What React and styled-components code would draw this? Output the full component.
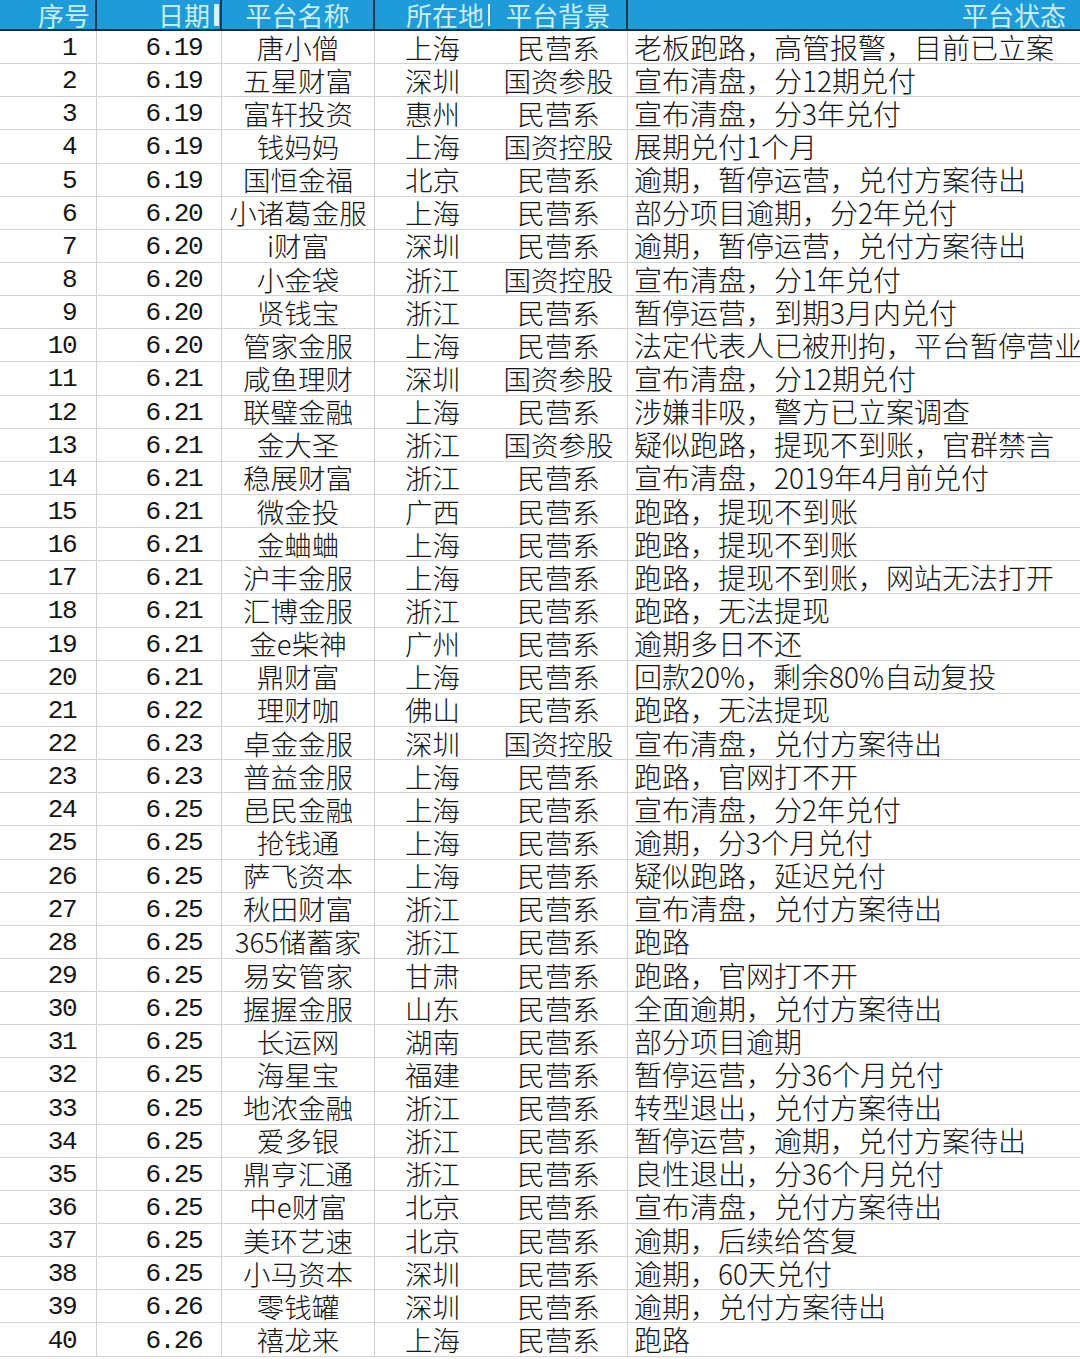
import React from 'react';
import styled, { createGlobalStyle } from 'styled-components';

const GlobalStyle = createGlobalStyle`
  html, body {
    margin: 0;
    padding: 0;
    background: #ffffff;
    overflow: hidden;
  }
`;

const COLS = '97px 125px 153px 115px 138px 1fr';
const CJK = '"Noto Sans CJK SC", "Noto Sans", sans-serif';
const MONO = '"Liberation Mono", "DejaVu Sans Mono", monospace';

const Sheet = styled.div`
  width: 1080px;
  height: 1359px;
  overflow: hidden;
  background: #fff;
  font-family: ${CJK};
`;

const HeaderRow = styled.div`
  display: grid;
  grid-template-columns: ${COLS};
  height: 29px;
  background: #1f9bd9;
  border-bottom: 2px solid #1b2a36;
  overflow: hidden;
`;

const HeadCell = styled.div`
  display: flex;
  align-items: center;
  justify-content: ${p => p.$align || 'center'};
  padding: ${p => p.$pad || '0'};
  border-right: ${p => (p.$line ? '2px solid #1d3a4c' : 'none')};
  color: #c9eef7;
  font-size: 26px;
  line-height: 27px;
  white-space: nowrap;
  gap: 4px;
`;

const HeadBar = styled.span`
  display: inline-block;
  width: ${p => p.$w || 4}px;
  height: 22px;
  background: #d8f3fa;
`;

const Row = styled.div`
  display: grid;
  grid-template-columns: ${COLS};
  height: 33.15px;
  box-sizing: border-box;
  border-bottom: 1px solid #d3d3d3;
`;

const Cell = styled.div`
  display: flex;
  align-items: center;
  justify-content: ${p => p.$align || 'center'};
  padding: ${p => p.$pad || '0'};
  border-right: ${p => (p.$line ? '1px solid #cfcfcf' : 'none')};
  color: #151515;
  font-family: ${CJK};
  font-size: ${p => p.$size || '27.5px'};
  font-weight: 300;
  line-height: 29px;
  white-space: nowrap;
  overflow: ${p => (p.$spill ? 'visible' : 'hidden')};
`;

const NumCell = styled(Cell)`
  font-family: ${MONO};
  font-size: 26px;
  font-weight: 400;
  letter-spacing: -1.5px;
  padding-top: 3px;
  box-sizing: border-box;
`;

const rows = [
  ['6.19', '唐小僧', '上海', '民营系', '老板跑路，高管报警，目前已立案'],
  ['6.19', '五星财富', '深圳', '国资参股', '宣布清盘，分12期兑付'],
  ['6.19', '富轩投资', '惠州', '民营系', '宣布清盘，分3年兑付'],
  ['6.19', '钱妈妈', '上海', '国资控股', '展期兑付1个月'],
  ['6.19', '国恒金福', '北京', '民营系', '逾期，暂停运营，兑付方案待出'],
  ['6.20', '小诸葛金服', '上海', '民营系', '部分项目逾期，分2年兑付'],
  ['6.20', 'i财富', '深圳', '民营系', '逾期，暂停运营，兑付方案待出'],
  ['6.20', '小金袋', '浙江', '国资控股', '宣布清盘，分1年兑付'],
  ['6.20', '贤钱宝', '浙江', '民营系', '暂停运营，到期3月内兑付'],
  ['6.20', '管家金服', '上海', '民营系', '法定代表人已被刑拘，平台暂停营业'],
  ['6.21', '咸鱼理财', '深圳', '国资参股', '宣布清盘，分12期兑付'],
  ['6.21', '联璧金融', '上海', '民营系', '涉嫌非吸，警方已立案调查'],
  ['6.21', '金大圣', '浙江', '国资参股', '疑似跑路，提现不到账，官群禁言'],
  ['6.21', '稳展财富', '浙江', '民营系', '宣布清盘，2019年4月前兑付'],
  ['6.21', '微金投', '广西', '民营系', '跑路，提现不到账'],
  ['6.21', '金蛐蛐', '上海', '民营系', '跑路，提现不到账'],
  ['6.21', '沪丰金服', '上海', '民营系', '跑路，提现不到账，网站无法打开'],
  ['6.21', '汇博金服', '浙江', '民营系', '跑路，无法提现'],
  ['6.21', '金e柴神', '广州', '民营系', '逾期多日不还'],
  ['6.21', '鼎财富', '上海', '民营系', '回款20%，剩余80%自动复投'],
  ['6.22', '理财咖', '佛山', '民营系', '跑路，无法提现'],
  ['6.23', '卓金金服', '深圳', '国资控股', '宣布清盘，兑付方案待出'],
  ['6.23', '普益金服', '上海', '民营系', '跑路，官网打不开'],
  ['6.25', '邑民金融', '上海', '民营系', '宣布清盘，分2年兑付'],
  ['6.25', '抢钱通', '上海', '民营系', '逾期，分3个月兑付'],
  ['6.25', '萨飞资本', '上海', '民营系', '疑似跑路，延迟兑付'],
  ['6.25', '秋田财富', '浙江', '民营系', '宣布清盘，兑付方案待出'],
  ['6.25', '365储蓄家', '浙江', '民营系', '跑路'],
  ['6.25', '易安管家', '甘肃', '民营系', '跑路，官网打不开'],
  ['6.25', '握握金服', '山东', '民营系', '全面逾期，兑付方案待出'],
  ['6.25', '长运网', '湖南', '民营系', '部分项目逾期'],
  ['6.25', '海星宝', '福建', '民营系', '暂停运营，分36个月兑付'],
  ['6.25', '地浓金融', '浙江', '民营系', '转型退出，兑付方案待出'],
  ['6.25', '爱多银', '浙江', '民营系', '暂停运营，逾期，兑付方案待出'],
  ['6.25', '鼎亨汇通', '浙江', '民营系', '良性退出，分36个月兑付'],
  ['6.25', '中e财富', '北京', '民营系', '宣布清盘，兑付方案待出'],
  ['6.25', '美环艺速', '北京', '民营系', '逾期，后续给答复'],
  ['6.25', '小马资本', '深圳', '民营系', '逾期，60天兑付'],
  ['6.26', '零钱罐', '深圳', '民营系', '逾期，兑付方案待出'],
  ['6.26', '禧龙来', '上海', '民营系', '跑路'],
];

export default function App() {
  return (
    <Sheet>
      <GlobalStyle />
      <HeaderRow>
        <HeadCell $align="flex-end" $pad="0 5px 0 0" $line>序号</HeadCell>
        <HeadCell $align="flex-end" $pad="0 1px 0 0" $line>
          日期<HeadBar $w={5} />
        </HeadCell>
        <HeadCell $line>平台名称</HeadCell>
        <HeadCell $align="flex-end">
          所在地<HeadBar $w={2} />
        </HeadCell>
        <HeadCell $line>平台背景</HeadCell>
        <HeadCell $align="flex-end" $pad="0 14px 0 0">平台状态</HeadCell>
      </HeaderRow>
      {rows.map(([date, name, city, bg, status], i) => (
        <Row key={i}>
          <NumCell $align="flex-end" $pad="0 20px 0 0" $line>{i + 1}</NumCell>
          <NumCell $align="flex-end" $pad="0 19px 0 0" $line>{date}</NumCell>
          <Cell $line>{name}</Cell>
          <Cell>{city}</Cell>
          <Cell $line>{bg}</Cell>
          <Cell $align="flex-start" $pad="0 0 0 6px" $size="28px" $spill>{status}</Cell>
        </Row>
      ))}
      <Row />
    </Sheet>
  );
}
